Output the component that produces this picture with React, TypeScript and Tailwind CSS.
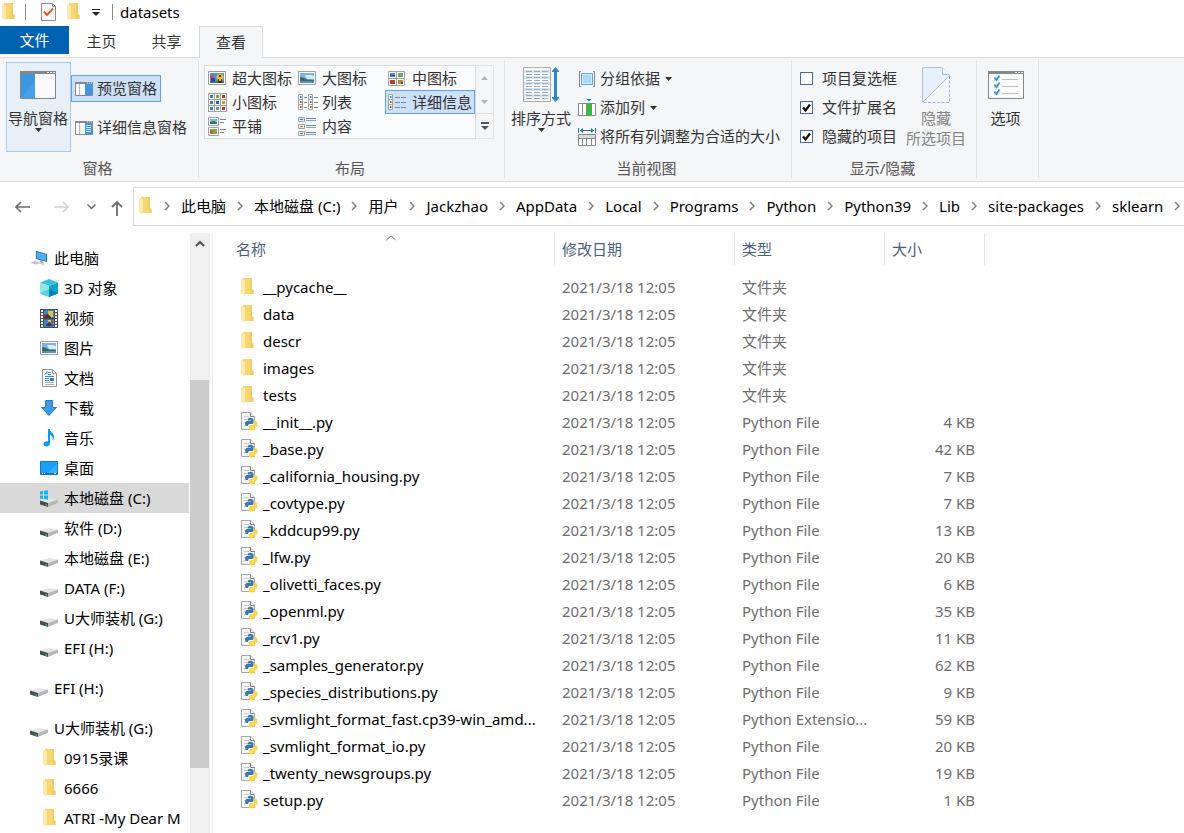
import type { ReactNode } from "react";

/* ---------- icons ---------- */

function FolderIcon({ className = "" }: { className?: string }) {
  return (
    <svg width="13" height="18" viewBox="0 0 13 18" className={`shrink-0 ${className}`} aria-hidden="true">
      <path d="M2 0h9v11l1.500 1v4H2z" fill="#f7d774" />
      <path d="M9 0h2v11l1.500 1v4H9z" fill="#f3cd66" />
      <path d="M0 .5l4 1.800V17.500L3 17 0 15.500z" fill="#fde9a9" />
    </svg>
  );
}

function PythonFileIcon() {
  return (
    <svg width="17" height="19" viewBox="0 0 17 19" className="shrink-0" aria-hidden="true">
      <path d="M.5.5h9l4 4v13H.5z" fill="#f7f7f7" stroke="#a6a6a6" />
      <path d="M9.500.5v4h4" fill="#fff" stroke="#808080" />
      <path d="M3 4.500h5M3 7.500h3M3 10.500h2M3 13.500h2" stroke="#c4c9d0" />
      <path d="M7 6.500q2-1.300 4.500-.3 1 .5 1 1.500v2.800q0 1.500-1.500 1.500H8.500Q7 12 7 14H5.500Q4 13.500 4 11.500T5.500 9H10V8.500H6.500q0-1.500.5-2z" fill="#3c78aa" />
      <path d="M13.300 9h1.500q2 .8 1.800 3.500T15 14.800H11v.5h3.500q0 2.500-2.500 3t-4-.8v-2.700Q8 13 9.500 13H12q1.300-.2 1.300-2z" fill="#fcd743" />
    </svg>
  );
}

function DriveIcon({ windows = false }: { windows?: boolean }) {
  return (
    <svg width="18" height="17" viewBox="0 0 18 17" className="shrink-0" aria-hidden="true">
      <path d="M0 10.500L9 8l9 1.500L8 13z" fill="#e3e5e8" />
      <path d="M0 10.500L8 13v4l-8-2.500z" fill="#4a4d50" />
      <path d="M8 13l10-3.500v3.300L8 17z" fill="#b5b7bb" />
      <path d="M5.500 14l1.500.5V16l-1.500-.5z" fill="#3fc73f" />
      {windows && <path d="M0 1.500L3 1v3.500H0zM4 .9L8 .3v4.200H4zM0 5.500h3V9l-3-.5zM4 5.500h4v4.200L4 9z" fill="#18b4f1" />}
    </svg>
  );
}

function ComputerIcon() {
  return (
    <svg width="20" height="18" viewBox="0 0 20 18" aria-hidden="true">
      <path d="M6.500 1L19 4.500v9L6.500 10z" fill="#2c6da5" />
      <path d="M7.500 2.300L18 5.200v7L7.500 9.200z" fill="#4bb1f5" />
      <path d="M11 11.200l3 .8v2l2 .8-4 .5z" fill="#8d98a3" />
      <path d="M0 14l6-2.200 7.500 2.500-5.500 2z" fill="#d6dadd" />
      <path d="M2 14l5 1.700M4.500 13l5 1.700M13 16l2.500 1" stroke="#b1b7bd" />
    </svg>
  );
}

function CubeIcon() {
  return (
    <svg width="18" height="18" viewBox="0 0 18 18" aria-hidden="true">
      <path d="M0 3.500L9 0l9 3.500L9 7z" fill="#36c1d5" />
      <path d="M0 3.500L9 7v11L0 14.500z" fill="#8fe5ee" />
      <path d="M18 3.500L9 7v11l9-3.500z" fill="#0ba3c9" />
      <path d="M9 10l9 4.500L9 18z" fill="#0786ab" />
      <path d="M9 10l-9 4.500L9 18z" fill="#5bcfdd" />
    </svg>
  );
}

function VideoIcon() {
  return (
    <svg width="18" height="19" viewBox="0 0 18 19" aria-hidden="true">
      <path d="M0 0h18v19H0z" fill="#4c4c4c" />
      <path d="M4 1h10v8H4zM4 10.500h10V18H4z" fill="#4381d8" />
      <path d="M8 2h5v6H8z" fill="#e6c42e" />
      <path d="M4 5h4v3H4zM9 12h4v2H9z" fill="#cc3a31" />
      <path d="M5 7l3-2 3 3v1H4zM6 16l3-3 4 4H6z" fill="#2e3b42" />
      <path d="M8 11h3v2H8z" fill="#e6c42e" />
      <path d="M2 1v18M16 1v18" stroke="#fff" strokeWidth="2" strokeDasharray="2 1" />
    </svg>
  );
}

// landscape photo, shared by the gallery and the sidebar
function PhotoIcon() {
  return (
    <svg width="18" height="14" viewBox="0 0 18 14" aria-hidden="true">
      <path d="M.5.5h17v13H.5z" fill="#fff" stroke="#a0a0a0" />
      <path d="M2 2h14v10H2z" fill="#76b4ea" />
      <path d="M7 4h6l3 1v3H9z" fill="#d8ecf8" />
      <path d="M2 6l3 .5L9 8.500l7 .5v1H2z" fill="#3b6b5c" />
      <path d="M2 10h14v2H2z" fill="#5b8fb5" />
    </svg>
  );
}

function DocumentIcon() {
  return (
    <svg width="15" height="18" viewBox="0 0 15 18" aria-hidden="true">
      <path d="M.5.5h10l4 4v13H.5z" fill="#fff" stroke="#8f9499" />
      <path d="M10.500.5v4h4" fill="none" stroke="#8f9499" />
      <path d="M3 5.500l2-3v3M6 3.500h3M6 5.500h3M3 7.500h9M3 9.500h4M3 11.500h4" stroke="#2a91d8" fill="none" />
      <path d="M8 9h4v3H8z" fill="#3579b8" />
      <path d="M3 13.500h9M3 15.500h9" stroke="#a8adb2" />
    </svg>
  );
}

function DownloadIcon() {
  return (
    <svg width="18" height="18" viewBox="0 0 18 18" aria-hidden="true">
      <path d="M5.500 1.500h7v7h4L9 16.500 1.500 8.500h4z" fill="#3f9bea" stroke="#2c7bc4" />
    </svg>
  );
}

function MusicIcon() {
  return (
    <svg width="18" height="18" viewBox="0 0 18 18" aria-hidden="true">
      <path d="M8 0h1.800c.3 3.500 4.700 4.200 4.200 8.500-.2 1.500-.8 2.500-1.500 3.200.8-3-.2-5-2.500-6V14c0 2-1.500 3.500-3.800 3.500C4.500 17.500 3.500 16.500 3.500 15c0-2 2.500-3.500 4.500-2.500z" fill="#0d9bf2" />
    </svg>
  );
}

function DesktopIcon() {
  return (
    <svg width="18" height="14" viewBox="0 0 18 14" aria-hidden="true">
      <path d="M.5.5h17v13H.5z" fill="#18a0f8" stroke="#1778c0" />
      <path d="M1 12.500h16" stroke="#116da6" />
      <path d="M2 12.500h1M4 12.500h1M14 12.500h2" stroke="#fff" />
      <path d="M17 3v9H8z" fill="#3bb0fb" />
    </svg>
  );
}

function NavPaneIcon() {
  return (
    <svg width="36" height="28" viewBox="0 0 36 28" aria-hidden="true">
      <path d="M.5.5h35v27H.5z" fill="#fafafa" stroke="#85888b" />
      <path d="M0 0h36v3H0z" fill="#85888b" />
      <path d="M27 1.500h2M30 1.500h2M33 1.500h2" stroke="#e8e8e8" />
      <path d="M1 3h14v24H1z" fill="#3f97df" />
      <path d="M1 27L15 10v17z" fill="#54a9ea" opacity=".5" />
    </svg>
  );
}

function PaneIcon({ lines = false }: { lines?: boolean }) {
  return (
    <svg width="18" height="14" viewBox="0 0 18 14" className="shrink-0" aria-hidden="true">
      <path d="M.5.5h17v13H.5z" fill="#fcfcfc" stroke="#85888b" />
      <path d="M0 0h18v2H0z" fill="#85888b" />
      <path d="M12 1h1M14 1h1M16 1h1" stroke="#eee" />
      <path d="M4.500 2v11" stroke="#b5b8ba" />
      <path d="M10 2h7v11h-7z" fill="#3f97df" />
      {lines && <path d="M11 4.500h5M11 6.500h5M11 8.500h5M11 10.500h5" stroke="#d9ecfb" />}
    </svg>
  );
}

function ExtraLargeIcon() {
  return (
    <svg width="18" height="14" viewBox="0 0 18 14" aria-hidden="true">
      <path d="M.5.5h17v13H.5z" fill="#fff" stroke="#9a9a9a" />
      <path d="M2 2h14v10H2z" fill="#4d8de8" />
      <path d="M2 10h14v2H2z" fill="#3c8e3a" />
      <path d="M2 5l2-1 2 3v2H2z" fill="#d14a52" />
      <path d="M3 7h4v4H3z" fill="#2d45b8" />
      <circle cx="12" cy="6" r="3.500" fill="#e8c11d" />
      <path d="M11 4h2v2h-2zM10 8h4v4h-4z" fill="#4b2a1c" />
      <path d="M11 8h2v2h-2z" fill="#e8c11d" />
    </svg>
  );
}

const thumbColors = ["#3f7fb5", "#6fa64a", "#c0392b", "#3f7fb5", "#2f5fb5", "#c7a02c", "#3f7fb5", "#5d9aa0", "#c0392b"];

function SmallIcons() {
  return (
    <svg width="19" height="19" viewBox="0 0 19 19" aria-hidden="true">
      {thumbColors.map((color, i) => {
        const x = (i % 3) * 6;
        const y = Math.floor(i / 3) * 6;
        return (
          <g key={i}>
            <rect x={x + 0.5} y={y + 0.5} width="6" height="6" fill="#fff" stroke="#a3a3a3" />
            <rect x={x + 2} y={y + 2} width="3" height="3" fill={color} />
          </g>
        );
      })}
    </svg>
  );
}

function MediumIcons() {
  return (
    <svg width="17" height="15" viewBox="0 0 17 15" aria-hidden="true">
      <path d="M.5.5h8v7h-8zM8.500.5h8v7h-8zM.5 7.500h8v7h-8zM8.500 7.500h8v7h-8z" fill="#fff" stroke="#a3a3a3" />
      <path d="M2 2h5v4H2z" fill="#4b8ccb" />
      <path d="M10 2h5v4h-5z" fill="#6fa678" />
      <path d="M2 9h5v4H2z" fill="#c23a2c" />
      <path d="M10 9h5v4h-5z" fill="#b98d2b" />
      <path d="M2 4h5v1H2zM13 11h2v2h-2z" fill="#2d4f76" />
    </svg>
  );
}

function ListIcon() {
  return (
    <svg width="20" height="16" viewBox="0 0 20 16" aria-hidden="true">
      <path d="M.5.5h4v15h-4zM10.500.5h4v15h-4zM0 5.500h5M0 10.500h5M10 5.500h5M10 10.500h5" fill="#fff" stroke="#a3a3a3" />
      <path d="M6 3.500h3M6 8.500h3M6 13.500h3M16 3.500h4M16 8.500h4M16 13.500h4" stroke="#7f8386" />
      <path d="M2 3h1.500M12 3h1.500" stroke="#3f7fb5" strokeWidth="2" />
      <path d="M2 8h1.500M12 8h1.500" stroke="#6c7d3c" strokeWidth="2" />
      <path d="M2 13h1.500M12 13h1.500" stroke="#c0392b" strokeWidth="2" />
    </svg>
  );
}

function DetailsIcon() {
  return (
    <svg width="18" height="16" viewBox="0 0 18 16" aria-hidden="true">
      <path d="M.5.5h4v15h-4zM0 5.500h5M0 10.500h5" fill="#fff" stroke="#a3a3a3" />
      <path d="M7 3.500h5M13 3.500h5M7 8.500h5M13 8.500h5M7 13.500h5M13 13.500h5" stroke="#7b8896" />
      <path d="M2 3h1.500" stroke="#3f7fb5" strokeWidth="2" />
      <path d="M2 8h1.500" stroke="#6c7d3c" strokeWidth="2" />
      <path d="M2 13h1.500" stroke="#c0392b" strokeWidth="2" />
    </svg>
  );
}

function TilesIcon() {
  return (
    <svg width="18" height="19" viewBox="0 0 18 19" aria-hidden="true">
      <path d="M.5.5h10v8H.5zM.5 10.500h10v8H.5z" fill="#fff" stroke="#a3a3a3" />
      <path d="M2 2h7v5H2z" fill="#7ab7e6" />
      <path d="M2 5l4-1 3 2v1H2z" fill="#376f69" />
      <path d="M2 12h7v5H2z" fill="#77a94b" />
      <path d="M2 13l3 1-1 3H2z" fill="#d2582f" />
      <path d="M12 2.500h6M12 5.500h4M12 12.500h6M12 15.500h4" stroke="#7f8386" />
    </svg>
  );
}

function ContentIcon() {
  return (
    <svg width="18" height="19" viewBox="0 0 18 19" aria-hidden="true">
      <path d="M.5.5h6v4h-6zM.5 7.500h6v4h-6zM.5 14.500h6v4h-6z" fill="#fff" stroke="#a3a3a3" />
      <path d="M2 2h3v1H2z" fill="#3f7fb5" stroke="#3f7fb5" strokeWidth=".5" />
      <path d="M2 9h3v1H2z" fill="#a98c3a" stroke="#a98c3a" strokeWidth=".5" />
      <path d="M2 16h3v1H2z" fill="#3f8fa0" stroke="#3f8fa0" strokeWidth=".5" />
      <path d="M8 1.500h10M8 8.500h10M8 15.500h10" stroke="#7f8386" />
      <path d="M8 3.500h10M8 10.500h10M8 17.500h10" stroke="#6aa9ea" />
    </svg>
  );
}

function SortIcon() {
  return (
    <svg width="36" height="36" viewBox="0 0 36 36" aria-hidden="true">
      <path d="M.5.5h27v34H.5z" fill="#fdfdfd" stroke="#a8a8a8" />
      <path d="M1 3h26v3H1zM1 9h26v3H1zM1 15h26v3H1zM1 21h26v3H1zM1 27h26v3H1z" fill="#cfe8f5" />
      <path d="M3 4.500h22M3 7.500h22M3 10.500h22M3 13.500h22M3 16.500h22M3 19.500h22M3 22.500h22M3 25.500h22M3 28.500h22M3 31.500h22" stroke="#a9a9a9" strokeDasharray="6 2" />
      <path d="M32.500 0L36 4v1h-2v25h2v1l-3.500 4L29 31v-1h2V5h-2V4z" fill="#2f86d0" />
    </svg>
  );
}

function GroupIcon() {
  return (
    <svg width="16" height="16" viewBox="0 0 16 16" aria-hidden="true">
      <path d="M2 .5H.5v15H2M14 .5h1.500v15H14" fill="none" stroke="#85888b" />
      <path d="M2.500 2.500h11v11h-11z" fill="#aad8fa" stroke="#62a4d8" />
      <path d="M3.500 3.500h9v9h-9z" fill="none" stroke="#d5edfd" />
    </svg>
  );
}

function AddColumnIcon() {
  return (
    <svg width="18" height="17" viewBox="0 0 18 17" aria-hidden="true">
      <path d="M.5 4.500h17v12H.5zM4.500 4v12" fill="#fff" stroke="#85888b" />
      <path d="M9 4h4v13H9z" fill="#2bc42b" />
      <path d="M8.500 4v13M13.500 4v13" stroke="#85888b" />
      <path d="M8.500 0h5L11 2.500z" fill="#2f75ad" />
    </svg>
  );
}

function FitColumnsIcon() {
  return (
    <svg width="18" height="18" viewBox="0 0 18 18" aria-hidden="true">
      <path d="M.5 0v5M17.500 0v5M2 2.500h14" stroke="#2f75ad" />
      <path d="M2 2.500L5 0v5zM16 2.500L13 0v5z" fill="#2f75ad" />
      <path d="M.5 6.500h17v11H.5z" fill="#fff" stroke="#85888b" />
      <path d="M1 7h16v3H1z" fill="#dcdcdc" />
      <path d="M1 10.500h16M4.500 11v6M8.500 11v6M13.500 11v6" stroke="#85888b" />
    </svg>
  );
}

function HideIcon() {
  return (
    <svg width="29" height="36" viewBox="0 0 29 36" aria-hidden="true">
      <path d="M.5.5h20l7 8L.5 35.500z" fill="#e6f0fb" stroke="#b4c2d6" />
      <path d="M20.500.5v7h7" fill="#f7fafd" stroke="#b4c2d6" />
      <path d="M27.500 9v26.500H1" fill="none" stroke="#a2b3cb" strokeDasharray="3 1.500" />
    </svg>
  );
}

function OptionsIcon() {
  return (
    <svg width="36" height="28" viewBox="0 0 36 28" aria-hidden="true">
      <path d="M.5.5h35v27H.5z" fill="#fbfbfb" stroke="#85888b" />
      <path d="M0 0h36v3H0z" fill="#85888b" />
      <path d="M27 1.500h2M30 1.500h2M33 1.500h2" stroke="#e8e8e8" />
      <path d="M14 8.500h16M14 15.500h16M14 22.500h16" stroke="#c0c0c0" />
      <path d="M6 6h5v4H6zM6 13h5v4H6zM6 20h5v4H6z" fill="#dcdcdc" />
      <path d="M6.500 6.500l2 2.500 3-4.500M6.500 13.500l2 2.500 3-4.500M6.500 20.500l2 2.500 3-4.500" fill="none" stroke="#3497e4" strokeWidth="1.800" />
    </svg>
  );
}

function Caret({ className = "" }: { className?: string }) {
  return (
    <svg width="7" height="4" viewBox="0 0 7 4" className={`shrink-0 ${className}`} aria-hidden="true">
      <path d="M0 0h7L3.500 4z" fill="currentColor" />
    </svg>
  );
}

function Chevron() {
  return (
    <svg width="6" height="10" viewBox="0 0 6 10" className="shrink-0" aria-hidden="true">
      <path d="M1 1l4 4-4 4" fill="none" stroke="#808080" strokeWidth="1.500" />
    </svg>
  );
}

/* ---------- data ---------- */

const layouts = [
  { label: "超大图标", icon: <ExtraLargeIcon /> },
  { label: "大图标", icon: <PhotoIcon /> },
  { label: "中图标", icon: <MediumIcons /> },
  { label: "小图标", icon: <SmallIcons /> },
  { label: "列表", icon: <ListIcon /> },
  { label: "详细信息", icon: <DetailsIcon />, active: true },
  { label: "平铺", icon: <TilesIcon /> },
  { label: "内容", icon: <ContentIcon /> },
];

const crumbs = [
  "此电脑",
  "本地磁盘 (C:)",
  "用户",
  "Jackzhao",
  "AppData",
  "Local",
  "Programs",
  "Python",
  "Python39",
  "Lib",
  "site-packages",
  "sklearn",
];

interface TreeItem {
  label: string;
  icon: ReactNode;
  root?: boolean;
  selected?: boolean;
  spaced?: boolean;
}

const tree: TreeItem[] = [
  { label: "此电脑", icon: <ComputerIcon />, root: true },
  { label: "3D 对象", icon: <CubeIcon /> },
  { label: "视频", icon: <VideoIcon /> },
  { label: "图片", icon: <PhotoIcon /> },
  { label: "文档", icon: <DocumentIcon /> },
  { label: "下载", icon: <DownloadIcon /> },
  { label: "音乐", icon: <MusicIcon /> },
  { label: "桌面", icon: <DesktopIcon /> },
  { label: "本地磁盘 (C:)", icon: <DriveIcon windows />, selected: true },
  { label: "软件 (D:)", icon: <DriveIcon /> },
  { label: "本地磁盘 (E:)", icon: <DriveIcon /> },
  { label: "DATA (F:)", icon: <DriveIcon /> },
  { label: "U大师装机 (G:)", icon: <DriveIcon /> },
  { label: "EFI (H:)", icon: <DriveIcon /> },
  { label: "EFI (H:)", icon: <DriveIcon />, root: true, spaced: true },
  { label: "U大师装机 (G:)", icon: <DriveIcon />, root: true, spaced: true },
  { label: "0915录课", icon: <FolderIcon /> },
  { label: "6666", icon: <FolderIcon /> },
  { label: "ATRI -My Dear M", icon: <FolderIcon /> },
];

interface FileRow {
  name: string;
  type: string;
  size?: string;
}

const files: FileRow[] = [
  { name: "__pycache__", type: "文件夹" },
  { name: "data", type: "文件夹" },
  { name: "descr", type: "文件夹" },
  { name: "images", type: "文件夹" },
  { name: "tests", type: "文件夹" },
  { name: "__init__.py", type: "Python File", size: "4 KB" },
  { name: "_base.py", type: "Python File", size: "42 KB" },
  { name: "_california_housing.py", type: "Python File", size: "7 KB" },
  { name: "_covtype.py", type: "Python File", size: "7 KB" },
  { name: "_kddcup99.py", type: "Python File", size: "13 KB" },
  { name: "_lfw.py", type: "Python File", size: "20 KB" },
  { name: "_olivetti_faces.py", type: "Python File", size: "6 KB" },
  { name: "_openml.py", type: "Python File", size: "35 KB" },
  { name: "_rcv1.py", type: "Python File", size: "11 KB" },
  { name: "_samples_generator.py", type: "Python File", size: "62 KB" },
  { name: "_species_distributions.py", type: "Python File", size: "9 KB" },
  { name: "_svmlight_format_fast.cp39-win_amd...", type: "Python Extensio...", size: "59 KB" },
  { name: "_svmlight_format_io.py", type: "Python File", size: "20 KB" },
  { name: "_twenty_newsgroups.py", type: "Python File", size: "19 KB" },
  { name: "setup.py", type: "Python File", size: "1 KB" },
];

/* ---------- sections ---------- */

function TitleBar() {
  return (
    <header className="flex h-[26px] shrink-0 items-center pb-0.5 pl-0.5">
      <FolderIcon />
      <span className="ml-2.5 h-4 w-px bg-[#8a8a8a]" />
      <button type="button" aria-label="属性" className="ml-[15px]">
        <svg width="15" height="18" viewBox="0 0 15 18" aria-hidden="true">
          <path d="M.5.5h11l3 3v14H.5z" fill="#fafafa" stroke="#8c8c8c" />
          <path d="M11.500.5v3h3" fill="none" stroke="#8c8c8c" />
          <path d="M3 8.500l3 3.500 6-6.500" fill="none" stroke="#e8562a" strokeWidth="2" />
        </svg>
      </button>
      <button type="button" aria-label="新建文件夹" className="ml-[11px]">
        <FolderIcon />
      </button>
      <button type="button" aria-label="自定义快速访问工具栏" className="ml-3">
        <svg width="8" height="7" viewBox="0 0 8 7" aria-hidden="true">
          <path d="M0 3h8L4 7z" fill="#222" />
          <path d="M0 .5h8" stroke="#222" />
        </svg>
      </button>
      <span className="ml-3 h-4 w-px bg-[#8a8a8a]" />
      <h1 className="ml-[7px] leading-5">datasets</h1>
    </header>
  );
}

function Tabs() {
  return (
    <nav className="flex h-8 shrink-0 items-start border-b border-[#dadbdc] text-[#333]">
      <button type="button" className="h-7 w-[69px] bg-[#0063b1] text-white">文件</button>
      <button type="button" className="h-[31px] w-[65px]">主页</button>
      <button type="button" className="h-[31px] w-[65px]">共享</button>
      <button type="button" className="h-8 w-16 border border-b-0 border-[#dadbdc] bg-[#f5f6f7]">查看</button>
    </nav>
  );
}

function RibbonGroup({ label, className = "", children }: { label: string; className?: string; children: ReactNode }) {
  return (
    <section className="flex h-[118px] shrink-0 flex-col justify-between border-r border-[#e2e3e4]">
      <div className={`flex items-start ${className}`}>{children}</div>
      <h2 className="h-5 pr-[3px] text-center leading-5 text-[#555]">{label}</h2>
    </section>
  );
}

function ToggleOption({ label, checked = false }: { label: string; checked?: boolean }) {
  return (
    <label className="flex h-[29px] items-center gap-[9px]">
      <span className="grid">
        <input
          type="checkbox"
          defaultChecked={checked}
          className="peer col-start-1 row-start-1 size-[13px] appearance-none border border-[#4a6a9c] bg-white"
        />
        <svg viewBox="0 0 13 13" className="pointer-events-none invisible col-start-1 row-start-1 size-[13px] peer-checked:visible" aria-hidden="true">
          <path d="M3 6.500l2.500 3 4.500-6" fill="none" stroke="#111" strokeWidth="2.200" />
        </svg>
      </span>
      {label}
    </label>
  );
}

function Ribbon() {
  return (
    <div className="flex h-[124px] shrink-0 overflow-hidden border-b border-[#dadbdc] bg-[#f5f6f7] pt-0.5 text-[#333]">
      <RibbonGroup label="窗格" className="pl-1.5 pr-[7px] pt-0.5">
        <button type="button" className="flex h-[90px] w-[65px] flex-col items-center border border-[#a4cbf0] bg-[#e8eff7] pt-2 pr-px">
          <NavPaneIcon />
          <span className="mt-[9px] leading-5 whitespace-nowrap">导航窗格</span>
          <Caret />
        </button>
        <div className="flex flex-col items-start gap-3 pt-[13px]">
          <button type="button" className="flex h-[27px] items-center gap-1 border border-[#62a2e4] bg-[#cce0f6] px-[3px] whitespace-nowrap">
            <PaneIcon />
            预览窗格
          </button>
          <button type="button" className="flex h-[27px] items-center gap-1 px-1 whitespace-nowrap">
            <PaneIcon lines />
            详细信息窗格
          </button>
        </div>
      </RibbonGroup>

      <RibbonGroup label="布局" className="pl-[5px] pr-2.5 pt-[5px]">
        <div className="grid grid-cols-[90px_90px_90px] grid-rows-[24px_24px_24px] border border-[#dadbdc] bg-[#fafbfc]">
          {layouts.map((item) => (
            <button
              key={item.label}
              type="button"
              className={`flex items-center border pl-0.5 whitespace-nowrap ${item.active ? "border-[#62a2e4] bg-[#cce0f8]" : "border-transparent"}`}
            >
              <span className="flex w-6 shrink-0">{item.icon}</span>
              {item.label}
            </button>
          ))}
        </div>
        <div className="flex h-[74px] w-[18px] flex-col border border-l-0 border-[#e2e3e4] text-[#b2b5ba]">
          <button type="button" aria-label="向上滚动" className="grid flex-1 place-items-center">
            <Caret className="rotate-180" />
          </button>
          <button type="button" aria-label="向下滚动" className="grid flex-1 place-items-center">
            <Caret />
          </button>
          <button type="button" aria-label="更多" className="grid flex-1 place-items-center border-t border-[#dadbdc]">
            <svg width="8" height="8" viewBox="0 0 8 8" aria-hidden="true">
              <path d="M0 0h8v2H0zM0 4h8L4 8z" fill="#44566c" />
            </svg>
          </button>
        </div>
      </RibbonGroup>

      <RibbonGroup label="当前视图" className="pl-1 pr-[11px] pt-1">
        <button type="button" className="flex w-16 flex-col items-center pt-[3px] whitespace-nowrap">
          <SortIcon />
          <span className="mt-[5px] leading-5">排序方式</span>
          <Caret />
        </button>
        <div className="flex flex-col items-start pl-[5px]">
          <button type="button" className="flex h-[29px] items-center">
            <span className="flex w-[22px] pl-px"><GroupIcon /></span>
            分组依据
            <Caret className="ml-[5px]" />
          </button>
          <button type="button" className="flex h-[29px] items-center">
            <span className="flex w-[22px]"><AddColumnIcon /></span>
            添加列
            <Caret className="ml-[5px]" />
          </button>
          <button type="button" className="flex h-[29px] items-center whitespace-nowrap">
            <span className="flex w-[22px]"><FitColumnsIcon /></span>
            将所有列调整为合适的大小
          </button>
        </div>
      </RibbonGroup>

      <RibbonGroup label="显示/隐藏" className="gap-[9px] pl-2 pr-2.5 pt-1">
        <div>
          <ToggleOption label="项目复选框" />
          <ToggleOption label="文件扩展名" checked />
          <ToggleOption label="隐藏的项目" checked />
        </div>
        <button type="button" disabled className="flex flex-col items-center pt-[3px] text-[#838383]">
          <HideIcon />
          <span className="mt-[5px] leading-5">隐藏</span>
          <span className="leading-5">所选项目</span>
        </button>
      </RibbonGroup>

      <RibbonGroup label="" className="pl-[9px] pr-[13px] pt-[11px]">
        <button type="button" className="flex w-[39px] flex-col items-center">
          <OptionsIcon />
          <span className="mt-[9px] leading-5">选项</span>
        </button>
      </RibbonGroup>
    </div>
  );
}

function AddressBar() {
  return (
    <div className="flex h-[51px] shrink-0 items-start overflow-hidden pt-[5px]">
      <div className="flex h-[39px] w-[133px] shrink-0 items-center pl-[15px] text-[#6e6e6e]">
        <button type="button" aria-label="后退">
          <svg width="15" height="12" viewBox="0 0 15 12" aria-hidden="true">
            <path d="M15 6H1M6 1L1 6l5 5" fill="none" stroke="currentColor" strokeWidth="1.700" />
          </svg>
        </button>
        <button type="button" aria-label="前进" disabled className="ml-6 text-[#d4d4d4]">
          <svg width="15" height="12" viewBox="0 0 15 12" aria-hidden="true">
            <path d="M0 6h14M9 1l5 5-5 5" fill="none" stroke="currentColor" strokeWidth="1.700" />
          </svg>
        </button>
        <button type="button" aria-label="最近浏览的位置" className="ml-[18px]">
          <svg width="9" height="6" viewBox="0 0 9 6" aria-hidden="true">
            <path d="M.5.5l4 4 4-4" fill="none" stroke="currentColor" strokeWidth="1.500" />
          </svg>
        </button>
        <button type="button" aria-label="上移" className="ml-[15px] pt-1">
          <svg width="12" height="15" viewBox="0 0 12 15" aria-hidden="true">
            <path d="M6 15V1M1 6l5-5 5 5" fill="none" stroke="currentColor" strokeWidth="1.800" />
          </svg>
        </button>
      </div>
      <div className="flex h-[39px] min-w-0 flex-1 items-center overflow-hidden border border-r-0 border-[#d9d9d9] pb-0.5 pl-[5px]">
        <FolderIcon />
        <ol className="flex items-center gap-[11px] pl-3">
          {crumbs.map((crumb) => (
            <li key={crumb} className="flex items-center gap-[11px] whitespace-nowrap">
              <Chevron />
              <a href="#" className="leading-5">{crumb}</a>
            </li>
          ))}
          <li>
            <Chevron />
          </li>
        </ol>
      </div>
    </div>
  );
}

function Sidebar() {
  return (
    <aside className="flex w-[213px] shrink-0 border-r border-[#f0f0f0]">
      <ul className="w-[189px] overflow-hidden pt-2.5">
        {tree.map((item, i) => (
          <li key={i} className={item.spaced ? "mt-2.5" : ""}>
            <a
              href="#"
              className={`flex h-[30px] items-center whitespace-nowrap ${item.root ? "pl-[30px]" : "pl-10"} ${item.selected ? "bg-[#d9d9d9]" : ""}`}
            >
              <span className="flex w-6 shrink-0">
                <span className="flex w-[18px] justify-center">{item.icon}</span>
              </span>
              {item.label}
            </a>
          </li>
        ))}
      </ul>
      {/* Scrollbar */}
      <div className="ml-px flex w-5 flex-col bg-[#f0f0f0]">
        <button type="button" aria-label="向上滚动" className="grid h-5 place-items-center">
          <svg width="10" height="7" viewBox="0 0 10 7" aria-hidden="true">
            <path d="M1 6l4-4 4 4" fill="none" stroke="#505050" strokeWidth="2" />
          </svg>
        </button>
        <div className="flex-[127]" />
        <div className="mr-px flex-[388] bg-[#cdcdcd]" />
        <div className="flex-[65]" />
      </div>
    </aside>
  );
}

function FileTable() {
  return (
    <main className="min-w-0 flex-1 overflow-hidden">
      <table className="w-[772px] table-fixed text-left">
        <colgroup>
          <col className="w-[342px]" />
          <col className="w-[180px]" />
          <col className="w-[150px]" />
          <col className="w-[100px]" />
        </colgroup>
        <thead>
          <tr className="h-10 align-top text-[#4c607a]">
            <th className="p-0 font-normal">
              <div className="relative h-8 border-r border-[#e5e5e5] pl-[23px] leading-8">
                名称
                <svg width="10" height="6" viewBox="0 0 10 6" className="absolute top-0.5 left-[173px]" aria-hidden="true">
                  <path d="M.5 5L5 .8 9.500 5" fill="none" stroke="#707070" />
                </svg>
              </div>
            </th>
            <th className="p-0 font-normal">
              <div className="h-8 border-r border-[#e5e5e5] pl-[7px] leading-8">修改日期</div>
            </th>
            <th className="p-0 font-normal">
              <div className="h-8 border-r border-[#e5e5e5] pl-[7px] leading-8">类型</div>
            </th>
            <th className="p-0 font-normal">
              <div className="h-8 border-r border-[#e5e5e5] pl-[7px] leading-8">大小</div>
            </th>
          </tr>
        </thead>
        <tbody>
          {files.map((file) => (
            <tr key={file.name} className="h-[27px] leading-5 whitespace-nowrap text-[#6d6d6d]">
              <td className="p-0 pl-7 text-black">
                <div className="flex items-center">
                  <span className="flex w-[22px] shrink-0">{file.size ? <PythonFileIcon /> : <FolderIcon />}</span>
                  {file.name}
                </div>
              </td>
              <td className="p-0 pl-[7px]">2021/3/18 12:05</td>
              <td className="p-0 pl-[7px]">{file.type}</td>
              <td className="p-0 pr-2.5 text-right">{file.size}</td>
            </tr>
          ))}
        </tbody>
      </table>
    </main>
  );
}

export default function App() {
  return (
    <div className="flex h-screen flex-col overflow-hidden bg-white font-['Noto_Sans','Noto_Sans_CJK_SC',sans-serif] text-[15px] text-black">
      <TitleBar />
      <Tabs />
      <Ribbon />
      <AddressBar />
      <div className="flex min-h-0 flex-1">
        <Sidebar />
        <FileTable />
      </div>
    </div>
  );
}
